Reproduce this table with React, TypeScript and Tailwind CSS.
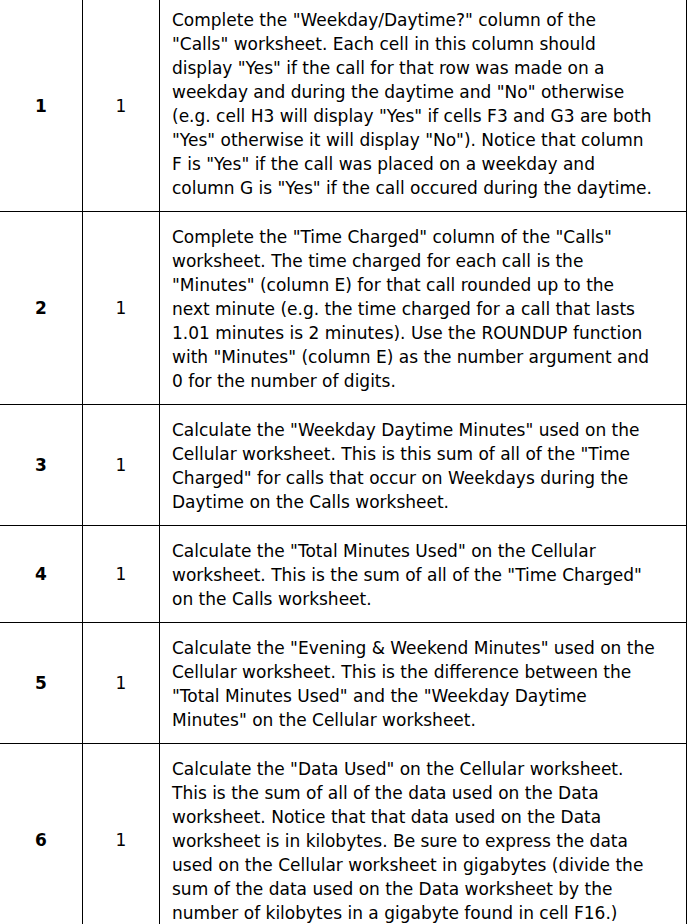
const rows: { num: string; lines: string[] }[] = [
  {
    num: '1',
    lines: [
      'Complete the "Weekday/Daytime?" column of the',
      '"Calls" worksheet. Each cell in this column should',
      'display "Yes" if the call for that row was made on a',
      'weekday and during the daytime and "No" otherwise',
      '(e.g. cell H3 will display "Yes" if cells F3 and G3 are both',
      '"Yes" otherwise it will display "No"). Notice that column',
      'F is "Yes" if the call was placed on a weekday and',
      'column G is "Yes" if the call occured during the daytime.',
    ],
  },
  {
    num: '2',
    lines: [
      'Complete the "Time Charged" column of the "Calls"',
      'worksheet. The time charged for each call is the',
      '"Minutes" (column E) for that call rounded up to the',
      'next minute (e.g. the time charged for a call that lasts',
      '1.01 minutes is 2 minutes). Use the ROUNDUP function',
      'with "Minutes" (column E) as the number argument and',
      '0 for the number of digits.',
    ],
  },
  {
    num: '3',
    lines: [
      'Calculate the "Weekday Daytime Minutes" used on the',
      'Cellular worksheet. This is this sum of all of the "Time',
      'Charged" for calls that occur on Weekdays during the',
      'Daytime on the Calls worksheet.',
    ],
  },
  {
    num: '4',
    lines: [
      'Calculate the "Total Minutes Used" on the Cellular',
      'worksheet. This is the sum of all of the "Time Charged"',
      'on the Calls worksheet.',
    ],
  },
  {
    num: '5',
    lines: [
      'Calculate the "Evening & Weekend Minutes" used on the',
      'Cellular worksheet. This is the difference between the',
      '"Total Minutes Used" and the "Weekday Daytime',
      'Minutes" on the Cellular worksheet.',
    ],
  },
  {
    num: '6',
    lines: [
      'Calculate the "Data Used" on the Cellular worksheet.',
      'This is the sum of all of the data used on the Data',
      'worksheet. Notice that that data used on the Data',
      'worksheet is in kilobytes. Be sure to express the data',
      'used on the Cellular worksheet in gigabytes (divide the',
      'sum of the data used on the Data worksheet by the',
      'number of kilobytes in a gigabyte found in cell F16.)',
    ],
  },
];

export default function App() {
  return (
    <div className="w-[687px] h-[924px] overflow-hidden bg-white text-black font-['DejaVu_Sans',sans-serif] text-[17px] leading-[24px]">
      {rows.map((row, i) => (
        <div key={row.num} className="grid grid-cols-[83px_77px_527px] border-b border-black">
          {/* task number */}
          <div className="flex items-center justify-center border-r border-black font-bold">{row.num}</div>
          {/* points */}
          <div className="flex items-center justify-center border-r border-black">1</div>
          <div className={`border-r border-black pl-[12px] pb-[11px] ${i === 0 ? 'pt-[8px]' : 'pt-[13px]'}`}>
            {row.lines.map((line, j) => (
              <div key={j} className="whitespace-nowrap">{line}</div>
            ))}
          </div>
        </div>
      ))}
    </div>
  );
}
